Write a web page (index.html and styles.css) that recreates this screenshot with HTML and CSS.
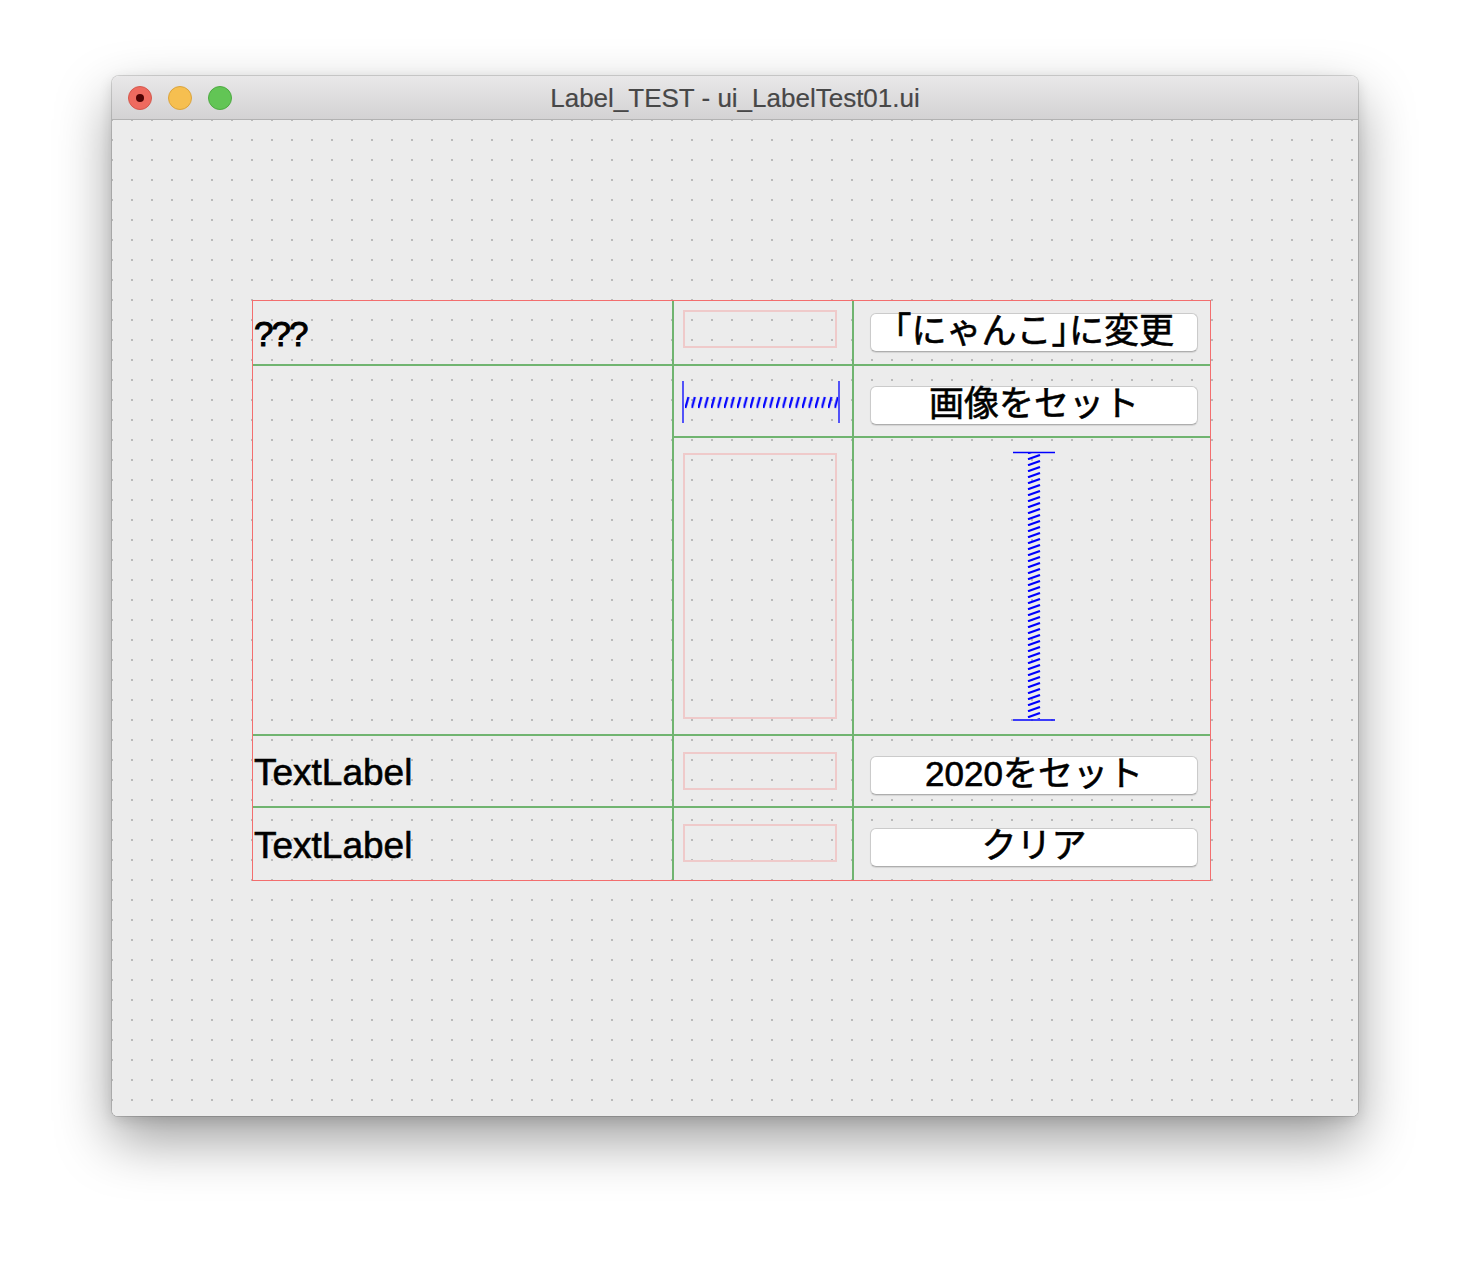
FILE: index.html
```html
<!DOCTYPE html>
<html lang="ja">
<head>
<meta charset="utf-8">
<title>Label_TEST - ui_LabelTest01.ui</title>
<link rel="stylesheet" href="styles.css">
</head>
<body>
<div class="stage">
  <div class="window">
    <div class="titlebar">
      <div class="lights">
        <span class="light red"></span>
        <span class="light yellow"></span>
        <span class="light green"></span>
      </div>
      <div class="title">Label_TEST - ui_LabelTest01.ui</div>
      <div></div>
    </div>
    <div class="canvas">
      <div class="form">
        <!-- row 1 -->
        <div class="cell br bb label qq">???</div>
        <div class="cell br bb slot s-r1"><div class="pink"></div></div>
        <div class="cell bb btncell b-r1"><button class="btn"><span class="half">「</span>にゃんこ<span class="half">」</span>に変更</button></div>
        <!-- row 2-3 -->
        <div class="cell br bb span2"></div>
        <div class="cell br bb hsp">
          <svg class="hspacer" width="158" height="42" viewBox="0 0 158 42">
            <defs>
              <pattern id="hz" x="3" y="0" width="6.5" height="42" patternUnits="userSpaceOnUse">
                <path d="M0.3 27L0.8 25.5L3.4 16" stroke="#0000ff" stroke-width="2.2" fill="none"/>
              </pattern>
            </defs>
            <rect x="2" y="14" width="154" height="15" fill="url(#hz)"/>
            <line x1="1" y1="0" x2="1" y2="42" stroke="#0000ff" stroke-width="1.3"/>
            <line x1="157" y1="0" x2="157" y2="42" stroke="#0000ff" stroke-width="1.3"/>
          </svg>
        </div>
        <div class="cell bb btncell b-r2"><button class="btn">画像をセット</button></div>
        <div class="cell br bb slot s-r3"><div class="pink tall"></div></div>
        <div class="cell bb vsp">
          <svg class="vspacer" width="42" height="270" viewBox="0 0 42 270">
            <defs>
              <pattern id="vz" x="0" y="3" width="42" height="6" patternUnits="userSpaceOnUse">
                <path d="M15 5.2L27 1" stroke="#0000ff" stroke-width="2.2" fill="none"/>
              </pattern>
            </defs>
            <rect x="14" y="2" width="14" height="266" fill="url(#vz)"/>
            <line x1="0" y1="1.5" x2="42" y2="1.5" stroke="#0000ff" stroke-width="1.3"/>
            <line x1="0" y1="269" x2="42" y2="269" stroke="#0000ff" stroke-width="1.3"/>
          </svg>
        </div>
        <!-- row 4 -->
        <div class="cell br bb label">TextLabel</div>
        <div class="cell br bb slot s-r4"><div class="pink"></div></div>
        <div class="cell bb btncell b-r4"><button class="btn">2020をセット</button></div>
        <!-- row 5 -->
        <div class="cell br label">TextLabel</div>
        <div class="cell br slot s-r5"><div class="pink"></div></div>
        <div class="cell btncell b-r5"><button class="btn">クリア</button></div>
      </div>
    </div>
  </div>
</div>
</body>
</html>
```
FILE: styles.css
```css
html, body {
  margin: 0;
  background: #ffffff;
}

.stage {
  box-sizing: border-box;
  height: 1264px;
  padding: 76px 0 0 112px;
  overflow: hidden;
}

.window {
  width: 1246px;
  height: 1040px;
  border-radius: 7px 7px 6px 6px;
  overflow: hidden;
  display: flex;
  flex-direction: column;
  box-shadow: 0 0 0 1px rgba(0, 0, 0, 0.14), 0 24px 55px rgba(0, 0, 0, 0.38), 0 4px 14px rgba(0, 0, 0, 0.12);
}

.titlebar {
  height: 43px;
  border-bottom: 1px solid #b2b2b2;
  background: linear-gradient(#e9e8e9, #d3d2d3);
  display: grid;
  grid-template-columns: 1fr auto 1fr;
  align-items: center;
}

.lights {
  display: flex;
  gap: 16px;
  padding-left: 16px;
  padding-top: 1px;
}

.light {
  width: 24px;
  height: 24px;
  border-radius: 50%;
  box-sizing: border-box;
}

.red {
  background: #ee6a5f;
  border: 1px solid #d5584d;
  display: flex;
  align-items: center;
  justify-content: center;
}

.red::after {
  content: "";
  width: 8px;
  height: 8px;
  border-radius: 50%;
  background: #4e0303;
}

.yellow {
  background: #f6bf50;
  border: 1px solid #dba43d;
}

.green {
  background: #62c555;
  border: 1px solid #4eaa42;
}

.title {
  font: 26px "Liberation Sans", Arial, sans-serif;
  color: #474747;
  padding-top: 1px;
  -webkit-text-stroke: 0.2px #474747;
}

.canvas {
  flex: 1;
  box-sizing: border-box;
  padding: 180px 0 0 140px;
  background-color: #ececec;
  background-image:
    linear-gradient(to right, #ececec 18px, transparent 18px),
    linear-gradient(to bottom, #ececec 18px, #bababa 18px);
  background-size: 20px 20px;
  background-position: 1px 1px;
}

.form {
  width: 959px;
  height: 581px;
  box-sizing: border-box;
  border: 1px solid #f36e6e;
  display: grid;
  grid-template-columns: 421px 180px 356px;
  grid-template-rows: 65px 72px 298px 72px 72px;
}

.cell {
  box-sizing: border-box;
  min-width: 0;
  min-height: 0;
}

.br { border-right: 2px solid #70b470; }
.bb { border-bottom: 2px solid #70b470; }

.span2 { grid-row: span 2; }

.label {
  display: flex;
  align-items: center;
  padding: 4px 0 0 1px;
  font: 37px "Liberation Sans", Arial, "Noto Sans CJK JP", sans-serif;
  color: #000;
  -webkit-text-stroke: 0.6px #000;
}

.label.qq {
  font-size: 35px;
  letter-spacing: -2px;
  padding-top: 2px;
  -webkit-text-stroke: 1px #000;
}

.slot { padding-left: 9px; }
.s-r1 { padding-top: 9px; }
.s-r3 { padding-top: 15px; }
.s-r4 { padding-top: 16px; }
.s-r5 { padding-top: 16px; }

.pink {
  width: 154px;
  height: 38px;
  box-sizing: border-box;
  border: 2px solid #efcaca;
}

.pink.tall { height: 266px; }

.hsp { padding: 15px 0 0 8px; }
.hspacer { display: block; }

.vsp { padding: 13px 0 0 159px; }
.vspacer { display: block; }

.btncell { padding-left: 16px; }
.b-r1 { padding-top: 12px; }
.b-r2 { padding-top: 20px; }
.b-r4 { padding-top: 20px; }
.b-r5 { padding-top: 20px; }

.btn {
  width: 328px;
  height: 39px;
  box-sizing: border-box;
  margin: 0;
  padding: 0 0 5px 0;
  background: #ffffff;
  border: 1px solid #cbcbcb;
  border-bottom-color: #aeaeae;
  border-radius: 6px;
  box-shadow: 0 1px 1px rgba(0, 0, 0, 0.1);
  display: flex;
  align-items: center;
  justify-content: center;
  font: 35px "Liberation Sans", Arial, "Noto Sans CJK JP", sans-serif;
  line-height: 1;
  color: #000;
  white-space: nowrap;
  -webkit-text-stroke: 0.6px #000;
}

.half {
  font-feature-settings: "halt" 1;
}
```
